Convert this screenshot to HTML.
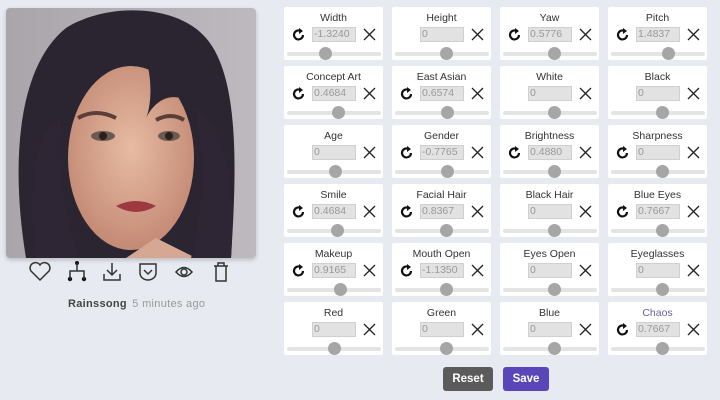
<!DOCTYPE html>
<html><head><meta charset="utf-8"><style>
*{margin:0;padding:0;box-sizing:border-box}
body{width:720px;height:400px;background:#e7eaf0;font-family:"Liberation Sans",sans-serif;position:relative;overflow:hidden}
.c{position:absolute;width:99px;height:53px;background:#fff;border-radius:2px}
.t{position:absolute;top:5px;left:0;width:100%;text-align:center;font-size:10.5px;color:#333}
.i{position:absolute;left:28px;top:20px;width:44px;height:15px;background:#e2e2e2;border:1px solid #d0d0d0;font-size:10.5px;color:#999;line-height:13px;padding-left:1px;overflow:hidden;white-space:nowrap}
.r{position:absolute;left:8px;top:21px;width:14px;height:14px}
.x{position:absolute;left:79px;top:21px;width:13px;height:13px}
.tr{position:absolute;left:3px;right:2px;top:45px;height:4px;background:#e4e4e4;border-radius:2px}
.th{position:absolute;top:40px;width:13px;height:13px;border-radius:50%;background:#a6a6a6}
.btn{position:absolute;top:367px;height:24px;border-radius:3px;color:#fff;font-size:11.5px;font-weight:bold;text-align:center;line-height:24px}
</style></head><body>

<svg style="position:absolute;left:6px;top:8px;border-radius:4px;box-shadow:0 2px 5px rgba(0,0,0,.2)" width="250" height="250" viewBox="0 0 250 250">
<defs>
<linearGradient id="bg" x1="0" x2="1"><stop offset="0" stop-color="#a9a5ab"/><stop offset="1" stop-color="#bdb9be"/></linearGradient>
<radialGradient id="sk" cx=".5" cy=".45" r=".6"><stop offset="0" stop-color="#e8bba3"/><stop offset="1" stop-color="#c08670"/></radialGradient>
</defs>
<rect width="250" height="250" fill="url(#bg)"/>
<path d="M20 250 C5 160 10 60 60 20 C100 -5 170 -5 200 30 C235 70 230 170 225 250 Z" fill="#2b2431"/>
<ellipse cx="125" cy="150" rx="63" ry="92" fill="url(#sk)"/>
<path d="M120 250 L150 230 L190 250Z" fill="#d6a893"/>
<path d="M55 120 C60 50 100 20 130 30 C150 60 145 100 140 110 C150 90 170 80 190 100 C195 70 170 20 130 18 C80 15 50 60 55 120Z" fill="#2b2431"/>
<path d="M55 110 C50 160 60 220 75 250 L30 250 C20 180 30 120 55 110Z" fill="#2e2634"/>
<path d="M190 100 C200 160 195 220 185 250 L225 250 C230 180 220 120 190 100Z" fill="#2e2634"/>
<path d="M72 110 Q90 100 110 110" stroke="#5a3f38" stroke-width="4" fill="none"/>
<path d="M150 112 Q165 104 178 112" stroke="#5a3f38" stroke-width="4" fill="none"/>
<ellipse cx="97" cy="128" rx="12" ry="5" fill="#6b5a50"/><circle cx="97" cy="128" r="4" fill="#2a2020"/>
<ellipse cx="163" cy="128" rx="11" ry="5" fill="#6b5a50"/><circle cx="163" cy="128" r="4" fill="#2a2020"/>
<path d="M110 198 Q130 188 150 198 Q130 210 110 198Z" fill="#9c3a40"/>
</svg>

<svg style="position:absolute;left:28px;top:260px" width="210" height="24" viewBox="0 0 210 24" fill="none" stroke="#333" stroke-width="1.5">
<path d="M12 20 L3 11 A5 5 0 0 1 12 5 A5 5 0 0 1 21 11 Z"/>
<circle cx="49" cy="3" r="2" fill="#111" stroke="none"/><circle cx="42" cy="19" r="2.2" fill="#111" stroke="none"/><circle cx="56" cy="19" r="2.2" fill="#111" stroke="none"/>
<path d="M49 3 V11 M42 19 V11 H56 V19"/>
<path d="M84 3 V15 M79 10 L84 15 L89 10 M76 14 V20 H92 V14"/>
<path d="M112 4 H128 V13 A8 7 0 0 1 112 13 Z M116 10 L120 14 L124 10"/>
<path d="M148 12 Q156 3 164 12 Q156 21 148 12Z"/><circle cx="156" cy="12" r="3"/>
<path d="M186 6 H200 M190 6 V3 H196 V6 M188 6 V21 H198 V6"/>
</svg>
<div style="position:absolute;left:68px;top:298px;font-size:11px;color:#444;font-weight:bold;letter-spacing:.3px">Rainssong <span style="font-weight:normal;color:#999;margin-left:2px">5 minutes ago</span></div>

<!-- cards -->
<div class="c" style="left:284px;top:7px"><div class="t">Width</div><svg class="r" viewBox="0 0 14 14"><path d="M11 7 A4.5 4.5 0 1 1 8 2.7" stroke="#111" stroke-width="2.2" fill="none"/><path d="M7 0 L11 3 L7 6Z" fill="#111"/></svg><div class="i">-1.3240</div><svg class="x" viewBox="0 0 13 13"><path d="M1 1L12 12M12 1L1 12" stroke="#222" stroke-width="1.3"/></svg><div class="tr"></div><div class="th" style="left:35px"></div></div>
<div class="c" style="left:392px;top:7px"><div class="t">Height</div><div class="i">0</div><svg class="x" viewBox="0 0 13 13"><path d="M1 1L12 12M12 1L1 12" stroke="#222" stroke-width="1.3"/></svg><div class="tr"></div><div class="th" style="left:48px"></div></div>
<div class="c" style="left:500px;top:7px"><div class="t">Yaw</div><svg class="r" viewBox="0 0 14 14"><path d="M11 7 A4.5 4.5 0 1 1 8 2.7" stroke="#111" stroke-width="2.2" fill="none"/><path d="M7 0 L11 3 L7 6Z" fill="#111"/></svg><div class="i">0.5776</div><svg class="x" viewBox="0 0 13 13"><path d="M1 1L12 12M12 1L1 12" stroke="#222" stroke-width="1.3"/></svg><div class="tr"></div><div class="th" style="left:48px"></div></div>
<div class="c" style="left:608px;top:7px"><div class="t">Pitch</div><svg class="r" viewBox="0 0 14 14"><path d="M11 7 A4.5 4.5 0 1 1 8 2.7" stroke="#111" stroke-width="2.2" fill="none"/><path d="M7 0 L11 3 L7 6Z" fill="#111"/></svg><div class="i">1.4837</div><svg class="x" viewBox="0 0 13 13"><path d="M1 1L12 12M12 1L1 12" stroke="#222" stroke-width="1.3"/></svg><div class="tr"></div><div class="th" style="left:54px"></div></div>

<div class="c" style="left:284px;top:66px"><div class="t">Concept Art</div><svg class="r" viewBox="0 0 14 14"><path d="M11 7 A4.5 4.5 0 1 1 8 2.7" stroke="#111" stroke-width="2.2" fill="none"/><path d="M7 0 L11 3 L7 6Z" fill="#111"/></svg><div class="i">0.4684</div><svg class="x" viewBox="0 0 13 13"><path d="M1 1L12 12M12 1L1 12" stroke="#222" stroke-width="1.3"/></svg><div class="tr"></div><div class="th" style="left:48px"></div></div>
<div class="c" style="left:392px;top:66px"><div class="t">East Asian</div><svg class="r" viewBox="0 0 14 14"><path d="M11 7 A4.5 4.5 0 1 1 8 2.7" stroke="#111" stroke-width="2.2" fill="none"/><path d="M7 0 L11 3 L7 6Z" fill="#111"/></svg><div class="i">0.6574</div><svg class="x" viewBox="0 0 13 13"><path d="M1 1L12 12M12 1L1 12" stroke="#222" stroke-width="1.3"/></svg><div class="tr"></div><div class="th" style="left:49px"></div></div>
<div class="c" style="left:500px;top:66px"><div class="t">White</div><div class="i">0</div><svg class="x" viewBox="0 0 13 13"><path d="M1 1L12 12M12 1L1 12" stroke="#222" stroke-width="1.3"/></svg><div class="tr"></div><div class="th" style="left:48px"></div></div>
<div class="c" style="left:608px;top:66px"><div class="t">Black</div><div class="i">0</div><svg class="x" viewBox="0 0 13 13"><path d="M1 1L12 12M12 1L1 12" stroke="#222" stroke-width="1.3"/></svg><div class="tr"></div><div class="th" style="left:48px"></div></div>

<div class="c" style="left:284px;top:125px"><div class="t">Age</div><div class="i">0</div><svg class="x" viewBox="0 0 13 13"><path d="M1 1L12 12M12 1L1 12" stroke="#222" stroke-width="1.3"/></svg><div class="tr"></div><div class="th" style="left:45px"></div></div>
<div class="c" style="left:392px;top:125px"><div class="t">Gender</div><svg class="r" viewBox="0 0 14 14"><path d="M11 7 A4.5 4.5 0 1 1 8 2.7" stroke="#111" stroke-width="2.2" fill="none"/><path d="M7 0 L11 3 L7 6Z" fill="#111"/></svg><div class="i">-0.7765</div><svg class="x" viewBox="0 0 13 13"><path d="M1 1L12 12M12 1L1 12" stroke="#222" stroke-width="1.3"/></svg><div class="tr"></div><div class="th" style="left:49px"></div></div>
<div class="c" style="left:500px;top:125px"><div class="t">Brightness</div><svg class="r" viewBox="0 0 14 14"><path d="M11 7 A4.5 4.5 0 1 1 8 2.7" stroke="#111" stroke-width="2.2" fill="none"/><path d="M7 0 L11 3 L7 6Z" fill="#111"/></svg><div class="i">0.4880</div><svg class="x" viewBox="0 0 13 13"><path d="M1 1L12 12M12 1L1 12" stroke="#222" stroke-width="1.3"/></svg><div class="tr"></div><div class="th" style="left:48px"></div></div>
<div class="c" style="left:608px;top:125px"><div class="t">Sharpness</div><svg class="r" viewBox="0 0 14 14"><path d="M11 7 A4.5 4.5 0 1 1 8 2.7" stroke="#111" stroke-width="2.2" fill="none"/><path d="M7 0 L11 3 L7 6Z" fill="#111"/></svg><div class="i">0</div><svg class="x" viewBox="0 0 13 13"><path d="M1 1L12 12M12 1L1 12" stroke="#222" stroke-width="1.3"/></svg><div class="tr"></div><div class="th" style="left:48px"></div></div>

<div class="c" style="left:284px;top:184px"><div class="t">Smile</div><svg class="r" viewBox="0 0 14 14"><path d="M11 7 A4.5 4.5 0 1 1 8 2.7" stroke="#111" stroke-width="2.2" fill="none"/><path d="M7 0 L11 3 L7 6Z" fill="#111"/></svg><div class="i">0.4684</div><svg class="x" viewBox="0 0 13 13"><path d="M1 1L12 12M12 1L1 12" stroke="#222" stroke-width="1.3"/></svg><div class="tr"></div><div class="th" style="left:47px"></div></div>
<div class="c" style="left:392px;top:184px"><div class="t">Facial Hair</div><svg class="r" viewBox="0 0 14 14"><path d="M11 7 A4.5 4.5 0 1 1 8 2.7" stroke="#111" stroke-width="2.2" fill="none"/><path d="M7 0 L11 3 L7 6Z" fill="#111"/></svg><div class="i">0.8367</div><svg class="x" viewBox="0 0 13 13"><path d="M1 1L12 12M12 1L1 12" stroke="#222" stroke-width="1.3"/></svg><div class="tr"></div><div class="th" style="left:48px"></div></div>
<div class="c" style="left:500px;top:184px"><div class="t">Black Hair</div><div class="i">0</div><svg class="x" viewBox="0 0 13 13"><path d="M1 1L12 12M12 1L1 12" stroke="#222" stroke-width="1.3"/></svg><div class="tr"></div><div class="th" style="left:48px"></div></div>
<div class="c" style="left:608px;top:184px"><div class="t">Blue Eyes</div><svg class="r" viewBox="0 0 14 14"><path d="M11 7 A4.5 4.5 0 1 1 8 2.7" stroke="#111" stroke-width="2.2" fill="none"/><path d="M7 0 L11 3 L7 6Z" fill="#111"/></svg><div class="i">0.7667</div><svg class="x" viewBox="0 0 13 13"><path d="M1 1L12 12M12 1L1 12" stroke="#222" stroke-width="1.3"/></svg><div class="tr"></div><div class="th" style="left:48px"></div></div>

<div class="c" style="left:284px;top:243px"><div class="t">Makeup</div><svg class="r" viewBox="0 0 14 14"><path d="M11 7 A4.5 4.5 0 1 1 8 2.7" stroke="#111" stroke-width="2.2" fill="none"/><path d="M7 0 L11 3 L7 6Z" fill="#111"/></svg><div class="i">0.9165</div><svg class="x" viewBox="0 0 13 13"><path d="M1 1L12 12M12 1L1 12" stroke="#222" stroke-width="1.3"/></svg><div class="tr"></div><div class="th" style="left:50px"></div></div>
<div class="c" style="left:392px;top:243px"><div class="t">Mouth Open</div><svg class="r" viewBox="0 0 14 14"><path d="M11 7 A4.5 4.5 0 1 1 8 2.7" stroke="#111" stroke-width="2.2" fill="none"/><path d="M7 0 L11 3 L7 6Z" fill="#111"/></svg><div class="i">-1.1350</div><svg class="x" viewBox="0 0 13 13"><path d="M1 1L12 12M12 1L1 12" stroke="#222" stroke-width="1.3"/></svg><div class="tr"></div><div class="th" style="left:48px"></div></div>
<div class="c" style="left:500px;top:243px"><div class="t">Eyes Open</div><div class="i">0</div><svg class="x" viewBox="0 0 13 13"><path d="M1 1L12 12M12 1L1 12" stroke="#222" stroke-width="1.3"/></svg><div class="tr"></div><div class="th" style="left:48px"></div></div>
<div class="c" style="left:608px;top:243px"><div class="t">Eyeglasses</div><div class="i">0</div><svg class="x" viewBox="0 0 13 13"><path d="M1 1L12 12M12 1L1 12" stroke="#222" stroke-width="1.3"/></svg><div class="tr"></div><div class="th" style="left:48px"></div></div>

<div class="c" style="left:284px;top:302px"><div class="t">Red</div><div class="i">0</div><svg class="x" viewBox="0 0 13 13"><path d="M1 1L12 12M12 1L1 12" stroke="#222" stroke-width="1.3"/></svg><div class="tr"></div><div class="th" style="left:44px"></div></div>
<div class="c" style="left:392px;top:302px"><div class="t">Green</div><div class="i">0</div><svg class="x" viewBox="0 0 13 13"><path d="M1 1L12 12M12 1L1 12" stroke="#222" stroke-width="1.3"/></svg><div class="tr"></div><div class="th" style="left:48px"></div></div>
<div class="c" style="left:500px;top:302px"><div class="t">Blue</div><div class="i">0</div><svg class="x" viewBox="0 0 13 13"><path d="M1 1L12 12M12 1L1 12" stroke="#222" stroke-width="1.3"/></svg><div class="tr"></div><div class="th" style="left:48px"></div></div>
<div class="c" style="left:608px;top:302px"><div class="t" style="color:#6b5fa0">Chaos</div><svg class="r" viewBox="0 0 14 14"><path d="M11 7 A4.5 4.5 0 1 1 8 2.7" stroke="#111" stroke-width="2.2" fill="none"/><path d="M7 0 L11 3 L7 6Z" fill="#111"/></svg><div class="i">0.7667</div><svg class="x" viewBox="0 0 13 13"><path d="M1 1L12 12M12 1L1 12" stroke="#222" stroke-width="1.3"/></svg><div class="tr"></div><div class="th" style="left:48px"></div></div>

<div class="btn" style="left:443px;width:50px;background:#5b5b5b">Reset</div>
<div class="btn" style="left:503px;width:46px;background:#5a46b8">Save</div>
</body></html>
